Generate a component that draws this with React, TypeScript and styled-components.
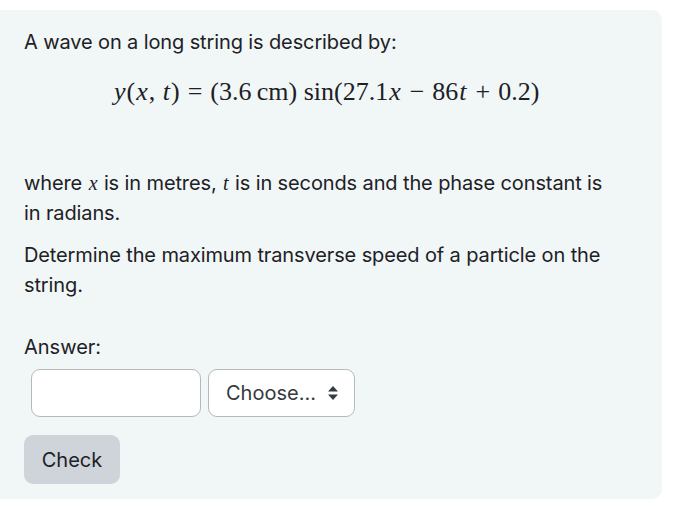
import React from "react";
import styled, { createGlobalStyle } from "styled-components";

const Global = createGlobalStyle`
  html, body { margin: 0; padding: 0; background: #ffffff; }
  body { font-family: Inter, "Liberation Sans", Arial, sans-serif; color: #1d2125; }
`;

const Page = styled.div`
  width: 700px;
  height: 516px;
  padding-top: 10px;
  box-sizing: border-box;
`;

const Panel = styled.div`
  width: 662px;
  height: 489px;
  box-sizing: border-box;
  background: #f1f6f7;
  border-radius: 0 10px 10px 0;
  padding: 17px 40px 0 24px;
`;

const Para = styled.p<{ $mt?: number }>`
  margin: ${(p) => p.$mt ?? 0}px 0 0 0;
  font-size: 20px;
  line-height: 30px;
  letter-spacing: -0.12px;
`;

const MathBlock = styled.div`
  margin-top: 17px;
  padding-left: 89px;
  font-family: "Liberation Serif", "Times New Roman", serif;
  font-size: 26px;
  line-height: 36px;
  white-space: nowrap;
`;

const V = styled.i`
  font-family: "Liberation Serif", "Times New Roman", serif;
  font-style: italic;
  padding: 0 1px;
`;

const Op = styled.span`
  margin: 0 8px;
`;

const Label = styled.div`
  margin-top: 32px;
  font-size: 20px;
  line-height: 30px;
`;

const Row = styled.div`
  display: flex;
  gap: 7px;
  margin-top: 7px;
  padding-left: 7px;
`;

const Input = styled.div`
  width: 170px;
  height: 48px;
  box-sizing: border-box;
  border: 1.5px solid #b5b9bd;
  border-radius: 9px;
  background: #ffffff;
`;

const Select = styled.div`
  width: 147px;
  height: 48px;
  box-sizing: border-box;
  border: 1.5px solid #b5b9bd;
  border-radius: 9px;
  background: #ffffff;
  display: flex;
  align-items: center;
  padding-left: 17px;
  gap: 12px;
  font-size: 20px;
  color: #343a40;
`;

const Check = styled.div`
  margin-top: 18px;
  width: 96px;
  height: 49px;
  border-radius: 9px;
  background: #ced4da;
  display: flex;
  align-items: center;
  justify-content: center;
  font-size: 20px;
  color: #1d2125;
`;

export default function App() {
  return (
    <Page>
      <Global />
      <Panel>
        <Para>A wave on a long string is described by:</Para>
        <MathBlock>
          <V>y</V>(<V>x</V>, <V>t</V>)<Op>=</Op>(3.6&thinsp;cm) sin(27.1<V>x</V>
          <Op>−</Op>86<V>t</V>
          <Op>+</Op>0.2)
        </MathBlock>
        <Para $mt={58}>
          where <V>x</V> is in metres, <V>t</V> is in seconds and the phase constant is in radians.
        </Para>
        <Para $mt={12}>Determine the maximum transverse speed of a particle on the string.</Para>
        <Label>Answer:</Label>
        <Row>
          <Input />
          <Select>
            Choose...
            <svg width="10" height="14" viewBox="0 0 10 14">
              <path d="M5 0 L10 5.5 H0 Z M5 14 L10 8.5 H0 Z" fill="#343a40" />
            </svg>
          </Select>
        </Row>
        <Check>Check</Check>
      </Panel>
    </Page>
  );
}
